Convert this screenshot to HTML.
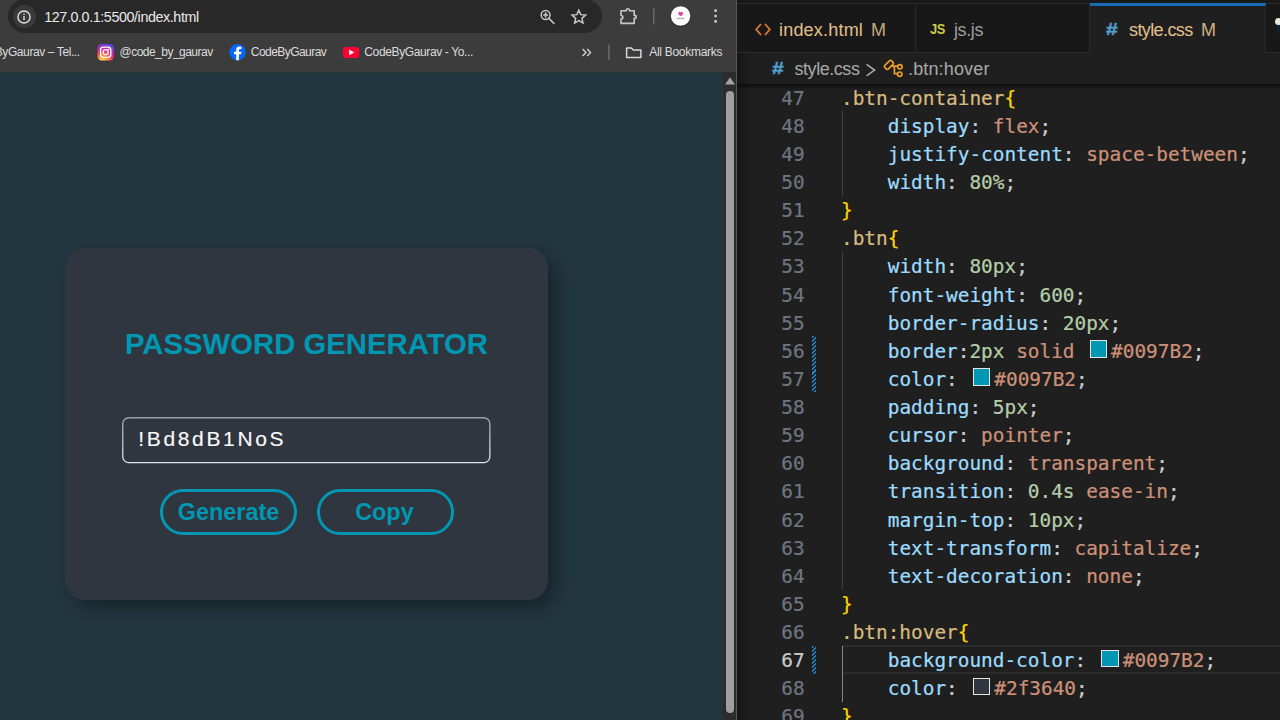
<!DOCTYPE html>
<html lang="en">
<head>
<meta charset="utf-8">
<title>Password Generator</title>
<style>
*{box-sizing:border-box;margin:0;padding:0}
html,body{width:1280px;height:720px;overflow:hidden;background:#1f1f1f}
body{position:relative;font-family:"Liberation Sans",sans-serif}
.abs{position:absolute}
/* ---------- browser chrome ---------- */
#chrome{position:absolute;left:0;top:0;width:736px;height:72px;background:#3c3c3c}
#omni{position:absolute;left:8.25px;top:-1.5px;width:594px;height:34px;border-radius:17px;background:#282828}
#info{position:absolute;left:4.75px;top:6.75px;width:22.5px;height:22.5px;border-radius:50%;background:#3a3a3a}
#url{position:absolute;left:36px;top:9.4px;font-size:14.3px;line-height:18px;color:#e8e8e8;white-space:nowrap;letter-spacing:-0.4px}
.bm{position:absolute;top:44.1px;font-size:12px;line-height:16px;color:#dcdcdc;white-space:nowrap}
/* ---------- page ---------- */
#page{position:absolute;left:0;top:72px;width:723px;height:648px;background:#22363f;overflow:hidden}
#sbar{position:absolute;left:723px;top:72px;width:13px;height:648px;background:#2c2c2c}
#thumb{position:absolute;left:2.7px;top:18.9px;width:8.8px;height:622.4px;border-radius:4.4px;background:#9f9f9f}
#card{position:absolute;left:65px;top:176px;width:483px;height:352px;border-radius:20px;background:#2f3640;box-shadow:8px 8px 17px rgba(0,0,0,.31)}
#title{position:absolute;left:0;width:483px;top:78px;text-align:center;font-weight:700;font-size:29.3px;line-height:36px;color:#0097b2;white-space:nowrap}
#inp{position:absolute;left:57.3px;top:168.8px;width:368.6px;height:46.4px}
#pw{position:absolute;left:16px;top:9.5px;font-size:21px;line-height:26px;color:#fafafa;-webkit-text-stroke:0.15px #fafafa;letter-spacing:2.65px;white-space:nowrap}
.btn{position:absolute;top:241px;width:137px;height:46px;border:3px solid #0397b2;border-radius:23px;color:#0097b2;font-weight:700;font-size:23.4px;line-height:40px;text-align:center;white-space:nowrap}
/* ---------- editor ---------- */
#split{position:absolute;left:736px;top:0;width:1px;height:720px;background:#575757}
#ed{position:absolute;left:737px;top:0;width:543px;height:720px;background:#1f1f1f;overflow:hidden}
#tabs{position:absolute;left:0;top:0;width:543px;height:53px;background:#181818;border-bottom:1px solid #2b2b2b}
.tab{position:absolute;top:3px;height:50px;border-right:1px solid #2b2b2b;border-top:1px solid #2b2b2b}
.tab .t{position:absolute;top:13.5px;font-size:18px;line-height:24px;white-space:nowrap}
#crumb{position:absolute;left:0;top:53px;width:543px;height:30px;background:#1f1f1f}
#crumb .t{position:absolute;top:4.4px;font-size:18px;line-height:24px;color:#a9a9a9;white-space:nowrap}
#code{position:absolute;left:0;top:83.1px;width:543px;height:640px;font-family:"DejaVu Sans Mono","Liberation Mono",monospace;font-size:19.4px;-webkit-text-stroke-width:0.22px}
.ln{position:absolute;left:0;width:543px;height:28.125px;line-height:28.125px;white-space:pre}
.ln .n{position:absolute;left:0;top:1.6px;width:67.6px;text-align:right;color:#6e7681}
.ln .c{position:absolute;left:104px;top:1.6px;color:#cccccc}
.s{color:#d7ba7d}.b{color:#ffd700}.p{color:#9cdcfe}.v{color:#ce9178}.m{color:#b5cea8}
.sw{display:inline-block;width:17.3px;height:17.3px;border:1.5px solid #e6e6e6;vertical-align:0.2px;margin:0 4.2px 0 3.4px}
</style>
</head>
<body>

<!-- browser chrome -->
<div id="chrome">
  <div id="omni">
    <div id="info"><svg class="abs" style="left:3.25px;top:3.25px" width="16" height="16" viewBox="0 0 16 16"><circle cx="8" cy="8" r="6.05" fill="none" stroke="#e0e0e0" stroke-width="1.4"/><rect x="7.3" y="7" width="1.4" height="4.3" fill="#e0e0e0"/><rect x="7.3" y="4.6" width="1.4" height="1.4" fill="#e0e0e0"/></svg></div>
    <div id="url">127.0.0.1:5500/index.html</div>
  </div>
  <!-- toolbar icons -->
  <svg class="abs" style="left:0;top:0" width="736" height="72" viewBox="0 0 736 72">
    <g fill="none" stroke="#c7c7c7" stroke-width="1.5">
      <circle cx="545.6" cy="15" r="4.4"/>
      <path d="M548.9 18.4 L554 23.5" stroke-linecap="round"/>
      <path d="M543.2 15 H548 M545.6 12.6 V17.4" stroke-width="1.7"/>
      <path d="M578.80 10.20 L580.74 14.63 L585.55 15.11 L581.94 18.32 L582.97 23.04 L578.80 20.60 L574.63 23.04 L575.66 18.32 L572.05 15.11 L576.86 14.63 Z" stroke-width="1.5" stroke-linejoin="miter"/>
      <path d="M621 10.7 H626.2 Q626.2 8.7 627.8 8.7 Q629.4 8.7 629.4 10.7 H634.2 V15.4 Q636.2 15.4 636.2 16.9 Q636.2 18.4 634.2 18.4 V23.4 H621 V18.9 Q622.9 18.9 622.9 17.2 Q622.9 15.5 621 15.5 Z" stroke-width="1.6" stroke-linejoin="round"/>
    </g>
    <rect x="653" y="8.6" width="1.5" height="15.6" fill="#6a6a6a"/>
    <circle cx="680.6" cy="16.6" r="10.4" fill="#2a2a2a"/>
    <circle cx="680.6" cy="16" r="9.75" fill="#fdfdfd"/>
    <path d="M680.7 16.2 q-3.2 -2.2 -2 -4 q1.1 -1.2 2 0.2 q0.9 -1.4 2 -0.2 q1.2 1.8 -2 4 Z" fill="#e0409a"/>
    <rect x="676.6" y="17.8" width="8" height="1.3" fill="#b9a9c9"/>
    <circle cx="715.6" cy="10.7" r="1.45" fill="#c7c7c7"/><circle cx="715.6" cy="16.1" r="1.45" fill="#c7c7c7"/><circle cx="715.6" cy="21.5" r="1.45" fill="#c7c7c7"/>
    <!-- bookmarks bar icons -->
    <defs>
      <radialGradient id="ig" cx="0.3" cy="1.07" r="1.25"><stop offset="0" stop-color="#fdf070"/><stop offset="0.1" stop-color="#fdd040"/><stop offset="0.4" stop-color="#fd5949"/><stop offset="0.6" stop-color="#d6249f"/><stop offset="0.92" stop-color="#4a4ae8"/></radialGradient>
    </defs>
    <rect x="97.5" y="44" width="16.4" height="16.4" rx="4.2" fill="url(#ig)"/>
    <g fill="none" stroke="#fff" stroke-width="1.3"><rect x="100.6" y="47.1" width="10.2" height="10.2" rx="2.8"/><circle cx="105.7" cy="52.2" r="2.5"/></g>
    <circle cx="108.7" cy="49.2" r="0.8" fill="#fff"/>
    <circle cx="237.6" cy="52.2" r="8.2" fill="#0866ff"/>
    <path d="M238.9 60.3 V54.3 H241 L241.4 51.8 H238.9 V50.3 Q238.9 49 240.3 49 H241.5 V46.8 Q240.4 46.6 239.4 46.6 Q236.2 46.6 236.2 49.9 V51.8 H234 V54.3 H236.2 V60.3 Z" fill="#fff"/>
    <rect x="343" y="46.9" width="16.2" height="11.1" rx="2.8" fill="#ff0033"/>
    <path d="M349.2 49.6 L354.2 52.45 L349.2 55.3 Z" fill="#fff"/>
    <path d="M582.6 49 L586 52.5 L582.6 56 M587.2 49 L590.6 52.5 L587.2 56" fill="none" stroke="#d0d0d0" stroke-width="1.4"/>
    <rect x="608.2" y="44.6" width="1.5" height="15.3" fill="#6a6a6a"/>
    <path d="M626.6 57.5 V48.1 H631.6 L633.2 49.9 H640.9 V57.5 Z" fill="none" stroke="#d8d8d8" stroke-width="1.5" stroke-linejoin="round"/>
  </svg>
  <div class="bm" style="left:-5.3px;letter-spacing:-0.4px">ByGaurav – Tel...</div>
  <div class="bm" style="left:119.5px;letter-spacing:-0.52px">@code_by_gaurav</div>
  <div class="bm" style="left:250.8px;letter-spacing:-0.55px">CodeByGaurav</div>
  <div class="bm" style="left:364.3px;letter-spacing:-0.37px">CodeByGaurav - Yo...</div>
  <div class="bm" style="left:649.2px;letter-spacing:-0.28px">All Bookmarks</div>
</div>

<!-- page -->
<div id="page">
  <div id="card">
    <div id="title">PASSWORD GENERATOR</div>
    <div id="inp"><svg class="abs" style="left:0;top:0" width="369" height="47" viewBox="0 0 369 47"><defs><linearGradient id="ib" x1="0" y1="0" x2="0" y2="1"><stop offset="0" stop-color="#9b9ea6"/><stop offset="0.5" stop-color="#b9bbc0"/><stop offset="1" stop-color="#e2e3e5"/></linearGradient></defs><rect x="0.75" y="0.75" width="367.1" height="44.9" rx="6" fill="none" stroke="url(#ib)" stroke-width="1.35"/></svg><div id="pw">!Bd8dB1NoS</div></div>
    <div class="btn" style="left:95px">Generate</div>
    <div class="btn" style="left:251.7px;text-indent:-1.5px">Copy</div>
  </div>
</div>
<div class="abs" style="left:0;top:72px;width:736px;height:1px;background:#2f393d;opacity:.55"></div>
<div id="sbar"><svg class="abs" style="left:0;top:0" width="13" height="16" viewBox="0 0 13 16"><path d="M7 5.3 L12 12.4 H2 Z" fill="#a3a3a3"/></svg><div id="thumb"></div></div>
<div id="split"></div>

<!-- editor -->
<div id="ed">
  <div class="abs" style="left:0;top:53px;width:14px;height:667px;background:linear-gradient(90deg,#161616,#1f1f1f);z-index:1"></div>
  <div id="tabs">
    <div class="abs" style="left:0;top:3px;width:543px;height:1px;background:#2b2b2b"></div>
    <div class="tab" style="left:3px;width:176px">
      <svg class="abs" style="left:15px;top:19px" width="16" height="13" viewBox="0 0 16 13"><path d="M6 1 L1.2 6.5 L6 12 M10 1 L14.8 6.5 L10 12" fill="none" stroke="#e37933" stroke-width="1.8"/></svg>
      <div class="t" style="left:39px;color:#e2c08d;letter-spacing:0.2px">index.html</div>
      <div class="t" style="left:131px;color:#c4a87c">M</div>
    </div>
    <div class="tab" style="left:179px;width:174px">
      <div class="t" style="left:13.5px;top:13.2px;font-size:15.3px;font-weight:700;color:#cbcb41;letter-spacing:-0.6px;transform:scaleX(.84);transform-origin:0 0">JS</div>
      <div class="t" style="left:38px;color:#9d9d9d;letter-spacing:-0.4px">js.js</div>
    </div>
    <div class="tab" style="left:353px;width:176px;height:51px;background:#1f1f1f;border-top:3px solid #1b6eb6;top:3px">
      <div class="t" style="left:15.8px;top:11.3px;color:#4f9fcc;font-weight:700;font-size:16.3px;-webkit-text-stroke:0.4px #4f9fcc;transform:scaleX(1.3);transform-origin:0 0">#</div>
      <div class="t" style="left:39px;top:11.5px;color:#e2c08d;letter-spacing:-0.6px">style.css</div>
      <div class="t" style="left:111px;top:11.5px;color:#cdb083">M</div>
    </div>
    <div class="abs" style="left:540px;top:23px;width:6px;height:11px;background:#0c2238"></div><div class="abs" style="left:537.6px;top:17.6px;width:7px;height:7px;border-radius:50%;background:#ebe7dc"></div>
  </div>
  <div id="crumb">
    <div class="t" style="left:35.4px;top:3.4px;color:#4f9fcc;font-weight:700;font-size:16.3px;-webkit-text-stroke:0.4px #4f9fcc;transform:scaleX(1.3);transform-origin:0 0">#</div>
    <div class="t" style="left:57.5px;letter-spacing:-0.45px">style.css</div>
    <svg class="abs" style="left:128px;top:10px" width="12" height="14" viewBox="0 0 12 14"><path d="M1.6 1.4 L9.6 7.1 L1.6 12.8" fill="none" stroke="#a9a9a9" stroke-width="1.6"/></svg>
    <svg class="abs" style="left:145px;top:4px" width="22" height="22" viewBox="0 0 22 22"><g fill="none" stroke="#ee9d28" stroke-width="1.7"><rect x="2.1" y="5.4" width="9.6" height="5" rx="1.6" transform="rotate(-45 6.9 7.9)"/><path d="M9.6 9.2 H15.6 M12.4 9.2 V16.6 H15.4"/><circle cx="17.9" cy="9.8" r="2.2"/><circle cx="17.7" cy="17.2" r="2.2"/></g></svg>
    <div class="t" style="left:171px;letter-spacing:0.15px">.btn:hover</div>
  </div>
  <div class="abs" style="left:0;top:83.5px;width:543px;height:6px;background:linear-gradient(180deg,rgba(0,0,0,.55),rgba(0,0,0,0));z-index:4"></div>
  <div id="code">
    <div class="abs" style="left:105px;top:562.00px;width:440px;height:29.12px;border-top:2px solid #2c2c2c;border-bottom:2px solid #2c2c2c"></div>
    <div class="abs" style="left:104.5px;top:28.12px;width:1.2px;height:84.38px;background:#3f3f3f"></div>
    <div class="abs" style="left:104.5px;top:168.75px;width:1.2px;height:337.50px;background:#3f3f3f"></div>
    <div class="abs" style="left:104.5px;top:562.50px;width:1.6px;height:56.25px;background:#858585"></div>
    <div class="abs" style="left:74.5px;top:253.12px;width:4.5px;height:56.25px;background:repeating-linear-gradient(135deg,#1f86cc 0 1.5px,transparent 1.5px 2.9px)"></div>
    <div class="abs" style="left:74.5px;top:562.50px;width:4.5px;height:28.12px;background:repeating-linear-gradient(135deg,#1f86cc 0 1.5px,transparent 1.5px 2.9px)"></div>
    <div class="ln" style="top:0.00px"><span class="n">47</span><span class="c"><span class="s">.btn-container</span><span class="b">{</span></span></div>
    <div class="ln" style="top:28.12px"><span class="n">48</span><span class="c">    <span class="p">display</span>: <span class="v">flex</span>;</span></div>
    <div class="ln" style="top:56.25px"><span class="n">49</span><span class="c">    <span class="p">justify-content</span>: <span class="v">space-between</span>;</span></div>
    <div class="ln" style="top:84.38px"><span class="n">50</span><span class="c">    <span class="p">width</span>: <span class="m">80%</span>;</span></div>
    <div class="ln" style="top:112.50px"><span class="n">51</span><span class="c"><span class="b">}</span></span></div>
    <div class="ln" style="top:140.62px"><span class="n">52</span><span class="c"><span class="s">.btn</span><span class="b">{</span></span></div>
    <div class="ln" style="top:168.75px"><span class="n">53</span><span class="c">    <span class="p">width</span>: <span class="m">80px</span>;</span></div>
    <div class="ln" style="top:196.88px"><span class="n">54</span><span class="c">    <span class="p">font-weight</span>: <span class="m">600</span>;</span></div>
    <div class="ln" style="top:225.00px"><span class="n">55</span><span class="c">    <span class="p">border-radius</span>: <span class="m">20px</span>;</span></div>
    <div class="ln" style="top:253.12px"><span class="n">56</span><span class="c">    <span class="p">border</span>:<span class="m">2px</span> <span class="v">solid</span> <i class="sw" style="background:#0097b2"></i><span class="v">#0097B2</span>;</span></div>
    <div class="ln" style="top:281.25px"><span class="n">57</span><span class="c">    <span class="p">color</span>: <i class="sw" style="background:#0097b2"></i><span class="v">#0097B2</span>;</span></div>
    <div class="ln" style="top:309.38px"><span class="n">58</span><span class="c">    <span class="p">padding</span>: <span class="m">5px</span>;</span></div>
    <div class="ln" style="top:337.50px"><span class="n">59</span><span class="c">    <span class="p">cursor</span>: <span class="v">pointer</span>;</span></div>
    <div class="ln" style="top:365.62px"><span class="n">60</span><span class="c">    <span class="p">background</span>: <span class="v">transparent</span>;</span></div>
    <div class="ln" style="top:393.75px"><span class="n">61</span><span class="c">    <span class="p">transition</span>: <span class="m">0.4s</span> <span class="v">ease-in</span>;</span></div>
    <div class="ln" style="top:421.88px"><span class="n">62</span><span class="c">    <span class="p">margin-top</span>: <span class="m">10px</span>;</span></div>
    <div class="ln" style="top:450.00px"><span class="n">63</span><span class="c">    <span class="p">text-transform</span>: <span class="v">capitalize</span>;</span></div>
    <div class="ln" style="top:478.12px"><span class="n">64</span><span class="c">    <span class="p">text-decoration</span>: <span class="v">none</span>;</span></div>
    <div class="ln" style="top:506.25px"><span class="n">65</span><span class="c"><span class="b">}</span></span></div>
    <div class="ln" style="top:534.38px"><span class="n">66</span><span class="c"><span class="s">.btn:hover</span><span class="b">{</span></span></div>
    <div class="ln" style="top:562.50px"><span class="n" style="color:#cccccc">67</span><span class="c">    <span class="p">background-color</span>: <i class="sw" style="background:#0097b2"></i><span class="v">#0097B2</span>;</span></div>
    <div class="ln" style="top:590.62px"><span class="n">68</span><span class="c">    <span class="p">color</span>: <i class="sw" style="background:#2f3640"></i><span class="v">#2f3640</span>;</span></div>
    <div class="ln" style="top:618.75px"><span class="n">69</span><span class="c"><span class="b">}</span></span></div>
  </div><!--/code-->
</div>

</body>
</html>
